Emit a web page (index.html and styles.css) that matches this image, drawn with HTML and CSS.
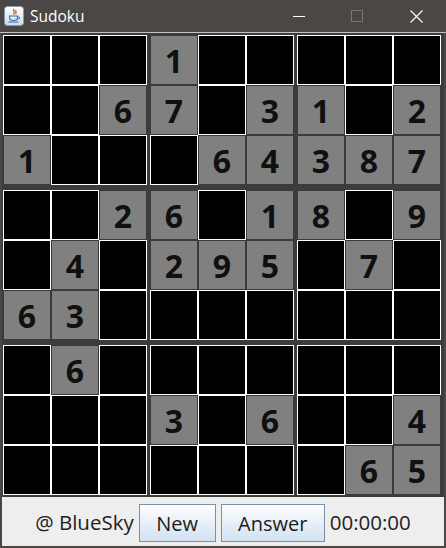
FILE: index.html
```html
<!DOCTYPE html>
<html lang="en">

<head>
    <meta charset="UTF-8">
    <meta name="viewport" content="width=device-width, initial-scale=1.0">
    <title>Sudoku</title>
    <link rel="stylesheet" href="styles.css">
</head>

<body>
    <div class="window">
        <div class="titleBar">
            <svg class="appIcon" width="20" height="20" viewBox="0 0 20 20">
                <defs>
                    <linearGradient id="iconBg" x1="0" y1="0" x2="0" y2="1">
                        <stop offset="0" stop-color="#ffffff" />
                        <stop offset="1" stop-color="#c9dcee" />
                    </linearGradient>
                </defs>
                <rect x="0.5" y="0.5" width="19" height="19" rx="3" fill="url(#iconBg)" stroke="#8a98a8" />
                <path d="M10 3 C8 5 12 6 9.5 8.5 M12 4 C11 6 13 6.5 11.5 8" stroke="#e2641f" stroke-width="1.4" fill="none" />
                <path d="M5.5 10 h8 v1.5 c0 2 -1.8 3 -4 3 s-4 -1 -4 -3 z" fill="none" stroke="#3f6fb0" stroke-width="1.1" />
                <path d="M13.5 11 h1.2 a1 1 0 0 1 0 2 h-1.4" fill="none" stroke="#3f6fb0" stroke-width="1" />
                <path d="M4.5 16 h10" stroke="#3f6fb0" stroke-width="1.1" />
            </svg>
            <span class="appTitle">Sudoku</span>
            <div class="winBtns">
                <span class="winBtn minBtn"></span>
                <span class="winBtn maxBtn"></span>
                <span class="winBtn closeBtn">
                    <svg width="13" height="13" viewBox="0 0 13 13">
                        <path d="M0.5 0.5 L12.5 12.5 M12.5 0.5 L0.5 12.5" stroke="#fff" stroke-width="1.1" />
                    </svg>
                </span>
            </div>
        </div>
        <div class="content">
            <div class="board" id="board"></div>
            <div class="bottomBar">
                <span class="label">@ BlueSky</span>
                <button class="btn newBtn">New</button>
                <button class="btn answerBtn">Answer</button>
                <span class="timer">00:00:00</span>
            </div>
        </div>
    </div>
    <script>
        // 0 = empty cell
        let puzzle = [
            [0, 0, 0, 1, 0, 0, 0, 0, 0],
            [0, 0, 6, 7, 0, 3, 1, 0, 2],
            [1, 0, 0, 0, 6, 4, 3, 8, 7],
            [0, 0, 2, 6, 0, 1, 8, 0, 9],
            [0, 4, 0, 2, 9, 5, 0, 7, 0],
            [6, 3, 0, 0, 0, 0, 0, 0, 0],
            [0, 6, 0, 0, 0, 0, 0, 0, 0],
            [0, 0, 0, 3, 0, 6, 0, 0, 4],
            [0, 0, 0, 0, 0, 0, 0, 6, 5]
        ];
        let board = document.querySelector('#board');
        for (let b = 0; b < 9; b++) {
            let block = document.createElement('div');
            block.classList.add('block');
            for (let c = 0; c < 9; c++) {
                let row = Math.floor(b / 3) * 3 + Math.floor(c / 3);
                let col = (b % 3) * 3 + (c % 3);
                let cell = document.createElement('div');
                cell.classList.add('cell');
                if (puzzle[row][col] != 0) {
                    cell.classList.add('given');
                    cell.innerHTML = puzzle[row][col];
                }
                block.appendChild(cell);
            }
            board.appendChild(block);
        }
    </script>
</body>

</html>
```

FILE: styles.css
```css
body {
    margin: 0;
    background-color: #4a4745;
    font-family: "Open Sans", "Noto Sans", sans-serif;
}

.window {
    width: 446px;
    height: 548px;
    display: flex;
    flex-direction: column;
    background-color: #4a4745;
}

.titleBar {
    height: 32px;
    border-bottom: 1px solid #c4c4c4;
    display: flex;
    align-items: center;
    color: #fff;
}

.appIcon {
    margin-left: 4px;
}

.appTitle {
    margin-left: 6px;
    font-size: 15.5px;
    margin-top: -1px;
}

.winBtns {
    margin-left: auto;
    display: flex;
    height: 100%;
}

.winBtn {
    width: 58px;
    height: 100%;
    display: flex;
    align-items: center;
    justify-content: center;
}

.minBtn::before {
    content: '';
    width: 12px;
    height: 1px;
    background: #fff;
}

.maxBtn::before {
    content: '';
    width: 10px;
    height: 10px;
    border: 1px solid #7a7876;
}

.closeBtn {
    width: 60px;
}

.content {
    flex: 1;
    margin: 0 2px 2px;
    display: flex;
    flex-direction: column;
}

.board {
    background-color: #3c3c3c;
    padding: 2px 3px 2px 1px;
    display: grid;
    grid-template-columns: repeat(3, 144px);
    grid-template-rows: repeat(3, 150px);
    column-gap: 3px;
    row-gap: 5px;
}

.block {
    display: grid;
    grid-template-columns: repeat(3, 48px);
    grid-template-rows: repeat(3, 50px);
}

.cell {
    box-sizing: border-box;
    border: 1px solid #fff;
    background-color: #000;
    display: flex;
    align-items: center;
    justify-content: center;
    font-size: 32px;
    font-weight: bold;
    color: #101010;
}

.cell.given {
    background-color: #808080;
    border-color: #3a3a3a;
}

.bottomBar {
    flex: 1;
    background-color: #eeeeee;
    display: flex;
    align-items: center;
    justify-content: center;
    gap: 5px;
    font-size: 20.5px;
    color: #222;
}

.btn {
    height: 38px;
    padding: 0;
    margin-top: 3px;
    border: 1px solid #7b8fa6;
    background: linear-gradient(#fdfeff, #d2e1f1);
    font-family: inherit;
    font-size: 20px;
    color: #1c1c1c;
}

.newBtn {
    width: 77px;
}

.answerBtn {
    width: 104px;
}
```
